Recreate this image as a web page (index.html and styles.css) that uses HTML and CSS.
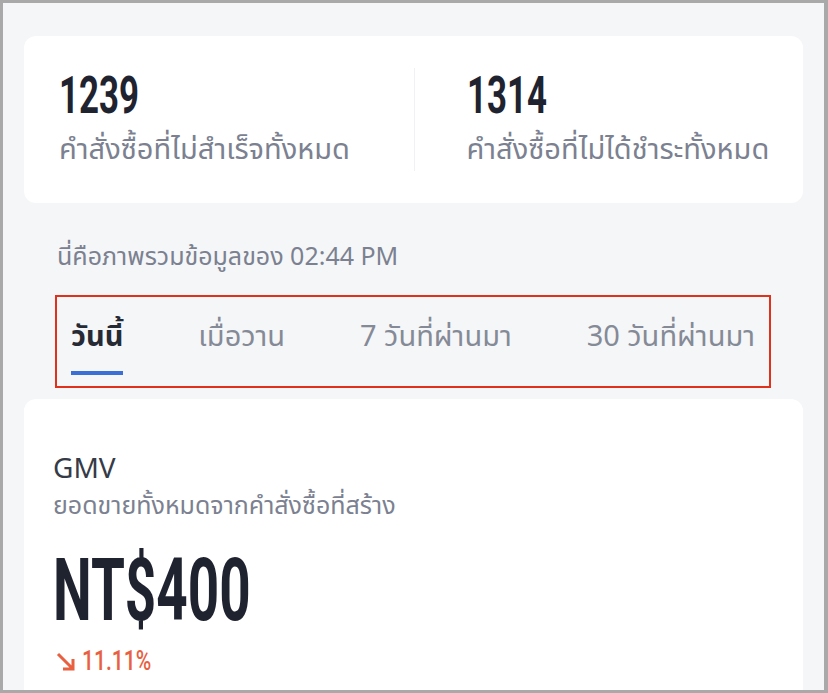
FILE: index.html
```html
<!DOCTYPE html>
<html lang="th">
<head>
<meta charset="UTF-8" />
<meta name="viewport" content="width=device-width, initial-scale=1" />
<title>ภาพรวมร้านค้า</title>
<link rel="stylesheet" href="styles.css">
</head>
<body>

<div class="screen">
  <section class="card summary">
    <div class="summary-item">
      <div class="big-num"><span>1239</span></div>
      <div class="summary-label">คำสั่งซื้อที่ไม่สำเร็จทั้งหมด</div>
    </div>
    <div class="summary-item">
      <div class="big-num"><span>1314</span></div>
      <div class="summary-label">คำสั่งซื้อที่ไม่ได้ชำระทั้งหมด</div>
    </div>
  </section>

  <p class="overview-time">นี่คือภาพรวมข้อมูลของ 02:44 PM</p>

  <nav class="tabs">
    <a href="#" class="tab active">วันนี้</a>
    <a href="#" class="tab">เมื่อวาน</a>
    <a href="#" class="tab">7 วันที่ผ่านมา</a>
    <a href="#" class="tab">30 วันที่ผ่านมา</a>
  </nav>

  <section class="card metric">
    <div class="metric-title">GMV</div>
    <div class="metric-desc">ยอดขายทั้งหมดจากคำสั่งซื้อที่สร้าง</div>
    <div class="metric-value"><span>NT$400</span></div>
    <div class="metric-change">
      <svg class="arrow" width="21" height="21" viewBox="0 0 21 21">
        <path d="M2 3 L17 18 M7 18 H17 V8" fill="none" stroke="#e8603f" stroke-width="3" />
      </svg>
      <span>11.11%</span>
    </div>
  </section>
</div>

</body>
</html>
```

FILE: styles.css
```css
html, body {
  height: 100%;
}
body {
  margin: 0;
  padding: 3px 4px 3px 3px;
  box-sizing: border-box;
  background: #a9a9a9;
  font-family: 'Noto Sans', 'Noto Sans Thai', sans-serif;
}
.screen {
  height: 100%;
  overflow: hidden;
  background: #f5f6f8;
  padding: 33px 21px 0 21px;
  box-sizing: border-box;
}
.card {
  background: #fff;
  border-radius: 12px;
}
.summary {
  display: grid;
  grid-template-columns: 1fr 1fr;
  height: 167px;
  box-sizing: border-box;
  padding: 32px 0;
}
.summary-item {
  padding-left: 35px;
}
.summary-item + .summary-item {
  border-left: 1px solid #f0f1f3;
  padding-left: 52px;
}
.big-num,
.metric-value,
.metric-change span {
  font-family: Roboto, sans-serif;
  font-weight: 700;
  color: #1f2330;
}
.big-num span,
.metric-value span,
.metric-change span {
  display: inline-block;
  transform-origin: left center;
}
.big-num {
  font-size: 52px;
  line-height: 52px;
  margin-top: 2px;
}
.big-num span {
  transform: scaleX(0.67);
}
.summary-label {
  font-size: 29px;
  line-height: 36px;
  color: #7b8190;
  margin-top: 8px;
}
.overview-time {
  margin: 36px 0 0 33px;
  font-size: 25px;
  line-height: 32px;
  color: #7b8190;
}
.tabs {
  display: flex;
  justify-content: space-between;
  margin: 24px 32px 11px 31px;
  border: 2px solid #e0311c;
  padding: 20px 14px 11px 14px;
}
.tab {
  text-decoration: none;
  color: #858a97;
  font-size: 29px;
  line-height: 36px;
  padding-bottom: 18px;
  border-bottom: 4px solid transparent;
}
.tab.active {
  color: #262a35;
  font-weight: 700;
  border-bottom-color: #3a6fd6;
}
.metric {
  padding: 50px 29px 60px;
  min-height: 320px;
}
.metric-title {
  font-size: 28px;
  line-height: 36px;
  color: #353b47;
}
.metric-desc {
  font-size: 25px;
  line-height: 34px;
  color: #7b8190;
  margin-top: 2px;
}
.metric-value {
  font-size: 87px;
  line-height: 90px;
  margin-top: 24px;
}
.metric-value span {
  transform: scaleX(0.63);
}
.metric-change {
  display: flex;
  align-items: center;
  gap: 5px;
  margin-top: 10px;
  padding-left: 3px;
}
.metric-change span {
  font-size: 27px;
  font-weight: 500;
  color: #e8603f;
  transform: scaleX(0.78);
}
```
